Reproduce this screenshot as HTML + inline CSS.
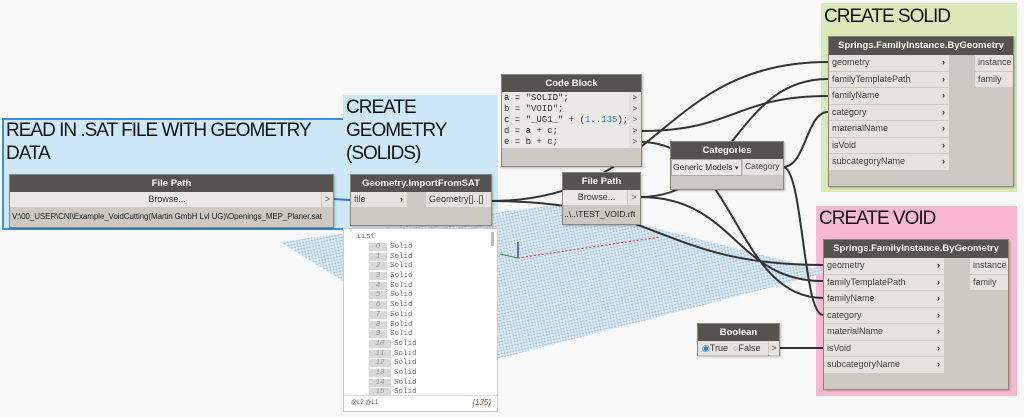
<!DOCTYPE html>
<html><head><meta charset="utf-8"><style>
*{margin:0;padding:0;box-sizing:border-box}
body{width:1024px;height:417px;background:#f8f8f8;position:relative;overflow:hidden;font-family:"Liberation Sans",sans-serif}
.a{position:absolute}
.grp{position:absolute}
.gt{position:absolute;font-size:19px;line-height:23px;color:#111;font-family:"Liberation Sans",sans-serif;letter-spacing:-1px;white-space:nowrap}
.node{position:absolute;background:#cdc9c2;border:1px solid #8a8680;box-shadow:1px 1px 2px rgba(0,0,0,.25)}
.hd{position:absolute;left:0;right:0;top:0;height:17px;background:#555350;color:#fff;font-weight:bold;font-size:9.5px;text-align:center;line-height:17px;white-space:nowrap}
.row{position:absolute;background:#e6e3de;font-size:9px;color:#444;line-height:15px;padding-left:3px;border-bottom:1px solid #cdc9c2;white-space:nowrap;overflow:hidden}
.arr{position:absolute;right:4px;top:0;font-weight:bold;color:#333;font-size:9px}
.code{font-family:"Liberation Mono",monospace;font-size:9px;color:#333;line-height:11px;white-space:nowrap}
.li{position:absolute;font-family:"Liberation Mono",monospace;font-size:7.5px;color:#777;white-space:nowrap}
.li div{height:9.7px}
.ix{display:inline-block;background:#d8d8d8;color:#999;width:18px;text-align:center;margin-right:3px;font-style:italic;line-height:8px}
</style></head><body>
<div class="grp" style="left:2px;top:118px;width:344px;height:112px;background:#cde9f8;border:2px solid #3b8fe0"></div>
<div class="gt" style="left:6px;top:119px">READ IN .SAT FILE WITH GEOMETRY<br>DATA</div>
<div class="grp" style="left:343px;top:95px;width:155px;height:140px;background:#cde9f8"></div>
<div class="gt" style="left:346px;top:96px">CREATE<br>GEOMETRY<br>(SOLIDS)</div>
<div class="grp" style="left:821px;top:3px;width:196px;height:189px;background:#dde8b8"></div>
<div class="gt" style="left:824px;top:5px">CREATE SOLID</div>
<div class="grp" style="left:816px;top:206px;width:201px;height:190px;background:#fbb9d1"></div>
<div class="gt" style="left:819px;top:207px">CREATE VOID</div>

<svg class="a" style="left:0;top:0" width="1024" height="417">
<defs><pattern id="p" width="3" height="3" patternUnits="userSpaceOnUse" patternTransform="rotate(-12)"><rect width="3" height="3" fill="#dce8f2"/><line x1="0" y1="0" x2="3" y2="0" stroke="#6fa6d2" stroke-width="1" stroke-dasharray="1,1"/><line x1="0" y1="0" x2="0" y2="3" stroke="#9cc2e0" stroke-width="0.6"/></pattern></defs>
<polygon points="280,242 560,204 830,272 478,364" fill="url(#p)"/>
<line x1="518" y1="242" x2="518" y2="258" stroke="#3344dd" stroke-width="1.5"/>
<line x1="518" y1="258" x2="660" y2="237" stroke="#e33" stroke-width="1" stroke-dasharray="2,2"/>
<line x1="500" y1="254" x2="518" y2="258" stroke="#393" stroke-width="1"/>
<g fill="none" stroke="#333" stroke-width="2">
<path d="M333,199 L350,200" stroke="#2a7fd4"/>
<path d="M491,201 C660,201 660,62 828,62"/>
<path d="M491,201 C660,201 660,265 823,265"/>
<path d="M641,131 C735,131 735,96 828,96"/>
<path d="M641,142 C735,142 735,298 823,298"/>
<path d="M640,197 C735,197 735,79 828,79"/>
<path d="M640,197 C735,197 735,281 823,281"/>
<path d="M783,167 C806,167 806,112 828,112"/>
<path d="M783,167 C803,167 803,315 823,315"/>
<path d="M779,348 L823,348"/>
</g>
</svg>

<div class="node" style="left:9px;top:174px;width:325px;height:54px">
<div class="hd">File Path</div>
<div class="row" style="left:0;top:17px;width:311px;height:16px;text-align:center;background:#ebe9e5;color:#333">Browse...</div>
<div class="row" style="left:312px;top:17px;width:11px;height:16px;padding:0;text-align:center;color:#555">&gt;</div>
<div class="a" style="left:2px;top:35px;font-size:8px;color:#222;line-height:14px;white-space:nowrap;letter-spacing:-0.1px">V:\00_USER\CNI\Example_VoidCutting(Martin GmbH Lvl UG)\Openings_MEP_Planer.sat</div>
</div>
<div class="node" style="left:350px;top:174px;width:142px;height:52px">
<div class="hd">Geometry.ImportFromSAT</div>
<div class="row" style="left:0;top:17px;width:56px;height:16px">file<span class="arr">›</span></div>
<div class="row" style="left:75px;top:17px;width:65px;height:16px">Geometry[]..[]</div>
</div>
<div class="a" style="left:343px;top:228px;width:155px;height:184px;background:#fff;border:1px solid #ccc">
<div class="a" style="right:3px;top:3px;width:3px;height:14px;background:#bbb"></div>
<div class="li" style="left:13px;top:4px">List</div>
<div class="li" style="left:25px;top:14px">
<div><span class="ix">0</span>Solid</div><div><span class="ix">1</span>Solid</div><div><span class="ix">2</span>Solid</div><div><span class="ix">3</span>Solid</div><div><span class="ix">4</span>Solid</div><div><span class="ix">5</span>Solid</div><div><span class="ix">6</span>Solid</div><div><span class="ix">7</span>Solid</div><div><span class="ix">8</span>Solid</div><div><span class="ix">9</span>Solid</div><div><span class="ix" style="width:22px">10</span>Solid</div><div><span class="ix" style="width:22px">11</span>Solid</div><div><span class="ix" style="width:22px">12</span>Solid</div><div><span class="ix" style="width:22px">13</span>Solid</div><div><span class="ix" style="width:22px">14</span>Solid</div><div><span class="ix" style="width:22px">15</span>Solid</div></div>
<div class="a" style="left:0;right:0;top:166px;border-top:1px solid #ddd;height:17px"></div>
<div class="a" style="left:7px;top:171px;font-size:6px;color:#555">@L2 @L1</div>
<div class="a" style="right:6px;top:169px;font-size:8px;color:#a0522d;font-style:italic">{135}</div>
</div>
<div class="node" style="left:501px;top:74px;width:141px;height:93px">
<div class="hd">Code Block</div>
<div class="a code" style="left:0;top:17px;width:127px;height:56px;background:#ebe9e5;padding:1px 0 0 2px">a = "SOLID";<br>b = "VOID";<br>c = "_UG1_" + (<span style="color:#2a7fd4">1</span>..<span style="color:#2a7fd4">135</span>);<br>d = a + c;<br>e = b + c;</div>
<div class="a" style="left:127px;top:17px;width:12px;height:56px;font-size:8px;color:#555;line-height:11px;text-align:center;background:#e6e3de">&gt;<br>&gt;<br>&gt;<br>&gt;<br>&gt;</div>
</div>
<div class="node" style="left:562px;top:172px;width:79px;height:53px">
<div class="hd">File Path</div>
<div class="row" style="left:0;top:17px;width:64px;height:16px;text-align:center;background:#ebe9e5;color:#333">Browse...</div>
<div class="row" style="left:65px;top:17px;width:12px;height:16px;padding:0;text-align:center;color:#555">&gt;</div>
<div class="a" style="left:1px;top:36px;font-size:8.5px;color:#222;white-space:nowrap">..\..\TEST_VOID.rft</div>
</div>
<div class="node" style="left:670px;top:141px;width:114px;height:49px">
<div class="hd">Categories</div>
<div class="row" style="left:0;top:17px;width:71px;height:17px;background:#ebe9e5;border:1px solid #aaa;color:#333;padding-left:1px;font-size:8.5px">Generic Models <span style="font-size:7px">▾</span></div>
<div class="row" style="left:72px;top:17px;width:40px;height:17px;font-size:8.5px;padding-left:2px">Category</div>
</div>
<div class="node" style="left:828px;top:36px;width:186px;height:151px">
<div class="hd" style="height:18px;line-height:18px">Springs.FamilyInstance.ByGeometry</div>
<div class="row" style="left:0;top:18px;width:120px;height:16.5px">geometry<span class="arr">›</span></div>
<div class="row" style="left:0;top:34.5px;width:120px;height:16.5px">familyTemplatePath<span class="arr">›</span></div>
<div class="row" style="left:0;top:51px;width:120px;height:16.5px">familyName<span class="arr">›</span></div>
<div class="row" style="left:0;top:67.5px;width:120px;height:16.5px">category<span class="arr">›</span></div>
<div class="row" style="left:0;top:84px;width:120px;height:16.5px">materialName<span class="arr">›</span></div>
<div class="row" style="left:0;top:100.5px;width:120px;height:16.5px">isVoid<span class="arr">›</span></div>
<div class="row" style="left:0;top:117px;width:120px;height:16.5px">subcategoryName<span class="arr">›</span></div>
<div class="row" style="left:146px;top:18px;width:38px;height:16.5px">instance</div>
<div class="row" style="left:146px;top:34.5px;width:38px;height:16.5px">family</div>
</div>
<div class="node" style="left:823px;top:239px;width:186px;height:151px">
<div class="hd" style="height:18px;line-height:18px">Springs.FamilyInstance.ByGeometry</div>
<div class="row" style="left:0;top:18px;width:120px;height:16.5px">geometry<span class="arr">›</span></div>
<div class="row" style="left:0;top:34.5px;width:120px;height:16.5px">familyTemplatePath<span class="arr">›</span></div>
<div class="row" style="left:0;top:51px;width:120px;height:16.5px">familyName<span class="arr">›</span></div>
<div class="row" style="left:0;top:67.5px;width:120px;height:16.5px">category<span class="arr">›</span></div>
<div class="row" style="left:0;top:84px;width:120px;height:16.5px">materialName<span class="arr">›</span></div>
<div class="row" style="left:0;top:100.5px;width:120px;height:16.5px">isVoid<span class="arr">›</span></div>
<div class="row" style="left:0;top:117px;width:120px;height:16.5px">subcategoryName<span class="arr">›</span></div>
<div class="row" style="left:146px;top:18px;width:38px;height:16.5px">instance</div>
<div class="row" style="left:146px;top:34.5px;width:38px;height:16.5px">family</div>
</div>
<div class="node" style="left:697px;top:323px;width:83px;height:33px">
<div class="hd">Boolean</div>
<div class="row" style="left:0;top:17px;width:70px;height:15px;color:#333;padding-left:4px"><span style="color:#2a7fd4">◉</span>True &nbsp;<span style="color:#999">○</span>False</div>
<div class="row" style="left:71px;top:17px;width:10px;height:15px;padding:0;text-align:center">&gt;</div>
</div>
</body></html>
